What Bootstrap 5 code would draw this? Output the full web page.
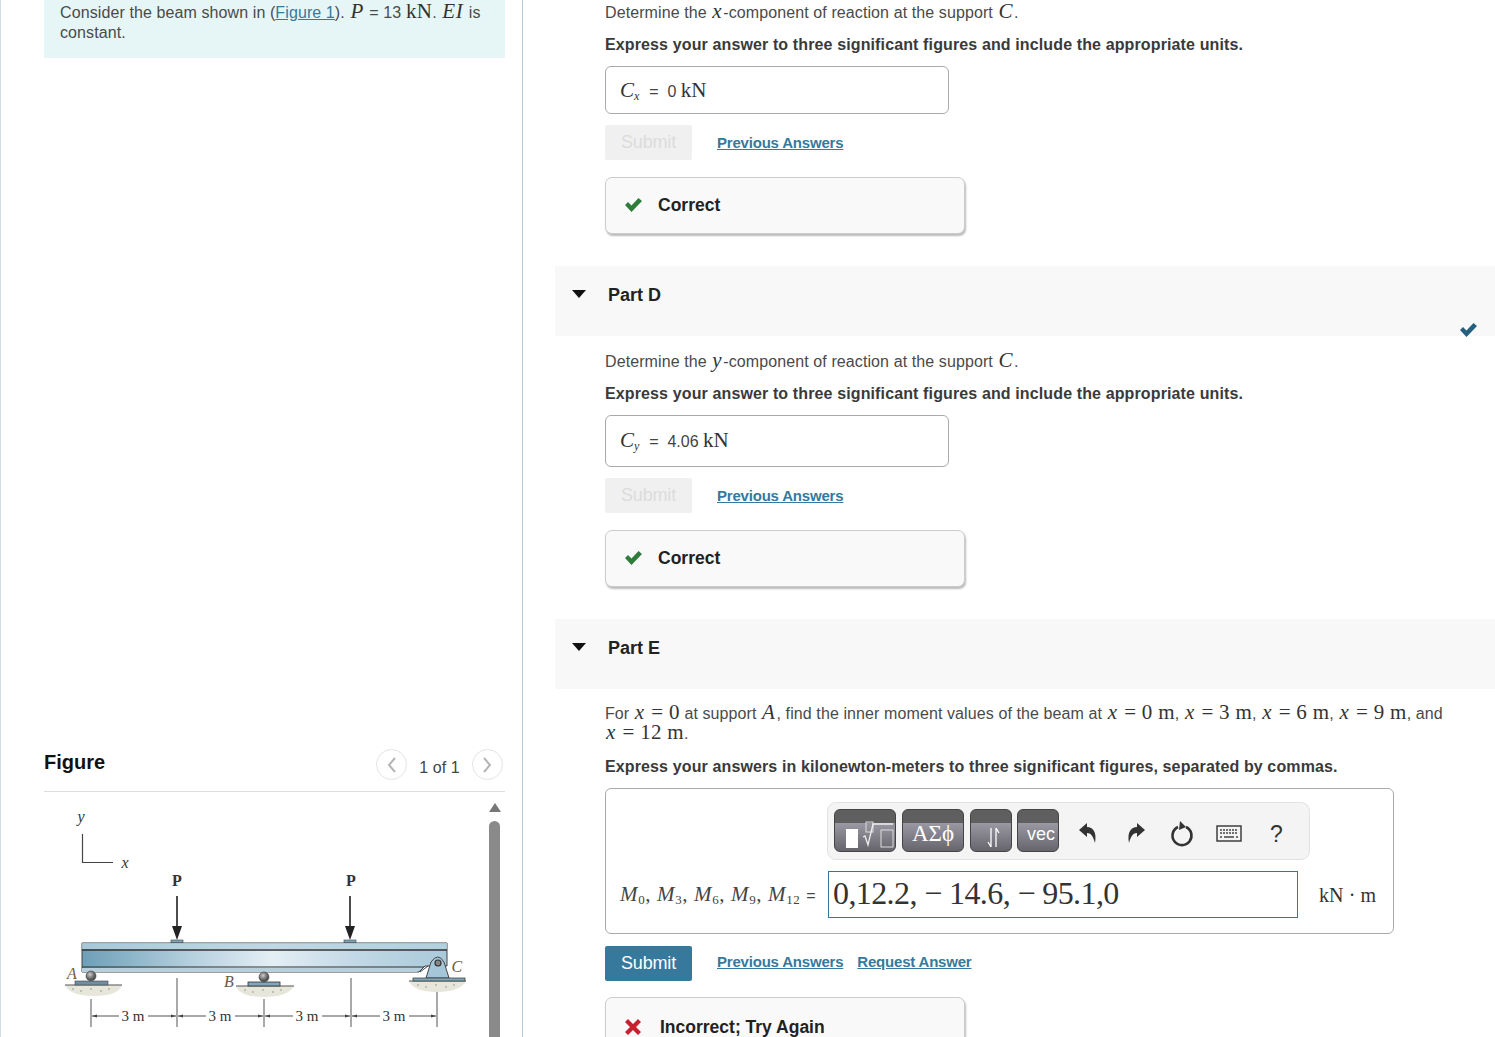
<!DOCTYPE html>
<html lang="en">
<head>
<meta charset="utf-8">
<title>Beam problem</title>
<link href="https://cdn.jsdelivr.net/npm/bootstrap@5.3.0/dist/css/bootstrap.min.css" rel="stylesheet">
<script src="https://cdn.jsdelivr.net/npm/bootstrap@5.3.0/dist/js/bootstrap.bundle.min.js"></script>
<style>
html,body{height:1037px;overflow:hidden;margin:0;background:#fff}
body{font-family:"Liberation Sans",Arial,sans-serif;font-size:16px;line-height:22px;color:#4a4a4a;letter-spacing:.1px}
.shell{height:1037px;overflow:hidden}
.leftpane{width:523px;flex:none;height:1037px;border-left:1px solid #d2dbe3;border-right:1px solid #b9c9dc;padding-left:43px;padding-right:17px;overflow:hidden}
.rightpane{flex:1 1 auto;padding-left:32px;min-width:0;height:1037px;overflow:hidden}
.infobox{background:#e6f6f6;height:58px;padding:3px 16px 0;line-height:20px;color:#4a4a4a}
.mi{font-family:"Liberation Serif",serif;font-style:italic;font-size:21px;line-height:0;color:#333;letter-spacing:.6px;padding:0 1px}
.mr{font-family:"Liberation Serif",serif;font-size:21px;line-height:0;color:#333;letter-spacing:.3px}
.eqs{padding:0 1px}
.sb{font-size:12px;line-height:0;vertical-align:-3px}
.plink{color:#36799c;text-decoration:underline}
.fighead{margin-top:692px;height:42px;border-bottom:1px solid #ddd}
.figtitle{font-size:20px;font-weight:700;color:#111;line-height:24px;letter-spacing:0}
.pager{color:#444;width:127px;margin-top:-1px;margin-right:2px}
.pagertext{padding-top:7px}
.pagerdot{width:31px;height:31px;border:1px solid #e4e4e4;border-radius:50%;flex:none}
.figrow{height:246px}
.figsvg{width:445px;height:246px;flex:none;display:block}
.vscroll{width:12px;flex:none}
.vthumb{width:11px;height:300px;background:#8a8a8a;border-radius:6px 6px 0 0;margin-top:8px}
.partbody{padding-left:50px}
.prompt{height:22px;padding-top:2px}
.bold-line{font-weight:700;color:#3a3a3a;margin-top:11px;height:22px;letter-spacing:.125px;padding-top:1px}
.answerline{width:344px;border:1px solid #aaa;border-radius:6px;padding-left:13px;color:#444;margin-top:11px;letter-spacing:0}
.answerline .mi,.answerline .mr{letter-spacing:0}
.h48{height:48px;padding-top:3px}
.h52{height:52px;padding-top:2px}
.act{margin-top:11px;height:35px}
.act-last{margin-top:12px;height:34px}
.submitbtn{width:87px;height:35px;padding:0;border-radius:2px;font-size:18px;line-height:33px;border:0;background:#36799c;color:#fff;font-family:"Liberation Sans",sans-serif;font-weight:400;letter-spacing:-.15px}
.submitbtn:disabled{background:#f0f0f0;color:#dcdcdc;opacity:1}
.actlink{font-size:15px;font-weight:700;color:#36799c;text-decoration:underline;margin-left:25px;letter-spacing:-.2px;padding-top:1px}
.actlink + .actlink{margin-left:14px}
.act-last .actlink{padding-top:0;margin-top:-3px}
.feedback{width:360px;height:57px;background:#f9f9f9;border:1px solid #ccc;border-radius:7px;box-shadow:1px 2px 2px #bbb;margin-top:17px;padding-left:18px;padding-bottom:2px;font-size:17.5px;font-weight:700;color:#222;letter-spacing:0}
.feedback svg{margin-right:16px;flex:none}
.feedback .xmark{margin-right:18px}
.fb-last{padding-top:2px;padding-bottom:0}
.parthead{height:70px;background:#f8f8f8;margin-top:32px;padding-left:17px;position:relative}
.parttri{margin-bottom:14px}
.parttitle{font-size:18px;font-weight:700;color:#222;margin-left:22px;margin-top:-12px;letter-spacing:0}
.partmark{position:absolute;right:18px;bottom:-1px}
.prompt-first{margin-top:13px}
.prompt-two{margin-top:14px;padding-top:1px;line-height:20px;height:41px}
.bigbox{width:789px;height:146px;border:1px solid #aaa;border-radius:6px;margin-top:11px;padding-top:13px}
.toolbar{width:483px;height:58px;margin-left:221px;background:#f4f4f4;border:1px solid #e2e2e2;border-radius:9px;padding:6px 0 0 6px}
.tbtn{height:43px;border:1px solid #444;border-radius:6px;background:linear-gradient(#5f5f5f 0,#5f5f5f 13px,#9a99a3 13px,#66656c 100%);color:#fff;margin-right:6px;overflow:hidden;flex:none}
.w62{width:62px}.w42{width:42px}.mr5{margin-right:5px}
.glyphs{line-height:24px;padding-bottom:5px}
.glyphs .mr{font-size:23px;line-height:24px;letter-spacing:0}
.vecbtn{padding-left:9px}
.toolicons{margin-left:13px;margin-top:-1px;color:#333;font-size:23px}
.gap-redo{margin-left:28px}.gap-ref{margin-left:24px}.gap-kb{margin-left:22px}.gap-q{margin-left:28px;letter-spacing:0}
.eqrow{margin-top:11px;height:47px}
.eqlabel{width:222px;padding-left:14px;font-family:"Liberation Serif",serif;font-size:21px;letter-spacing:.62px;color:#444;white-space:nowrap}
.eqlabel .sb{font-size:13px}
.eqeq{font-family:"Liberation Sans",sans-serif;font-size:16px}
.eqinput{width:470px;height:47px;border:1px solid #35789a;font-family:"Liberation Serif",serif;font-size:32px;line-height:43px;color:#333;padding-left:4px;white-space:nowrap;letter-spacing:-.6px}
.equnit{margin-left:21px;font-family:"Liberation Serif",serif;font-size:20px;color:#333}
.fig-t{font-family:"Liberation Serif",serif;fill:#333}
</style>
</head>
<body>
<div class="shell d-flex">
  <div class="leftpane">
    <div class="infobox">Consider the beam shown in (<span class="plink">Figure 1</span>). <span class="mi">P</span> = 13 <span class="mr">kN</span>. <span class="mi">EI</span> is constant.</div>
    <div class="fighead d-flex justify-content-between align-items-start">
      <div class="figtitle">Figure</div>
      <div class="pager d-flex justify-content-between align-items-center">
        <div class="pagerdot d-flex align-items-center justify-content-center"><svg width="10" height="16" viewBox="0 0 10 16"><path d="M8 1 2 8l6 7" fill="none" stroke="#b5b5b5" stroke-width="2"/></svg></div>
        <span class="pagertext">1 of 1</span>
        <div class="pagerdot d-flex align-items-center justify-content-center"><svg width="10" height="16" viewBox="0 0 10 16"><path d="M2 1l6 7-6 7" fill="none" stroke="#b5b5b5" stroke-width="2"/></svg></div>
      </div>
    </div>
    <div class="figrow d-flex">
      <svg class="figsvg" viewBox="44 792 445 246">
        <defs>
          <linearGradient id="web" x1="0" x2="1" y1="0" y2="0"><stop offset="0" stop-color="#6d9fb8"/><stop offset=".3" stop-color="#b5d0de"/><stop offset=".52" stop-color="#e4eef5"/><stop offset=".75" stop-color="#c2d8e5"/><stop offset="1" stop-color="#a9c9da"/></linearGradient>
          <filter id="soft"><feGaussianBlur stdDeviation=".35"/></filter>
          <radialGradient id="ball" cx=".4" cy=".35"><stop offset="0" stop-color="#ccc"/><stop offset="1" stop-color="#555"/></radialGradient>
        </defs>
        <g filter="url(#soft)">
          <path d="M82.500 834V862.500H113" fill="none" stroke="#444" stroke-width="1.200"/>
          <path d="M177 896V926M350 896V926" stroke="#222" stroke-width="1.600"/>
          <path d="M172 926h10l-5 14zM345 926h10l-5 14z" fill="#222"/>
          <rect x="171" y="940" width="12" height="3" fill="#7fa6ba" stroke="#444" stroke-width=".6"/>
          <rect x="344" y="940" width="12" height="3" fill="#7fa6ba" stroke="#444" stroke-width=".6"/>
          <path d="M82 943H447V966L425 966 419 972H82Z" fill="url(#web)" stroke="#444" stroke-width="1"/>
          <path d="M82 943H447V949H82Z" fill="#b7d2e0" fill-opacity=".8"/>
          <path d="M82 968H420L417 972H82Z" fill="#b8cfdc"/>
          <path d="M82 950H447" stroke="#333" stroke-width="1.600"/>
          <path d="M82 967H424" stroke="#333" stroke-width="1.200"/>
          <path d="M65 985H122Q118 996 94 996T65 985Z" fill="#e6e6da"/>
          <path d="M236 986H294Q288 997 264 997T236 986Z" fill="#e6e6da"/>
          <path d="M409 981H466Q460 992 437 992T409 981Z" fill="#e6e6da"/>
          <path d="M72 989h2m6 2h2m8-2h2m8 2h2m6-2h2M244 990h2m6 2h2m8-2h2m8 2h2m6-2h2M417 985h2m6 2h2m8-2h2m8 2h2m6-2h2" stroke="#999" stroke-width="1"/>
          <path d="M65 985H122M236 986H294M409 981H466" stroke="#555"/>
          <rect x="75" y="981" width="33" height="4" fill="#6d8fa3" stroke="#444" stroke-width=".6"/>
          <rect x="248" y="982" width="32" height="4" fill="#7fa6ba" stroke="#333" stroke-width=".8"/>
          <circle cx="91" cy="976" r="5" fill="url(#ball)" stroke="#444" stroke-width=".6"/>
          <circle cx="264" cy="977" r="5" fill="url(#ball)" stroke="#444" stroke-width=".6"/>
          <path d="M426 978 431 962Q438 952 444 962L449 978Z" fill="#a5c6d8" stroke="#444"/>
          <path d="M420 972 428 966" stroke="#444"/>
          <circle cx="438" cy="963" r="3" fill="#888" stroke="#333" stroke-width="1.200"/>
          <rect x="413" y="978" width="52" height="3" fill="#7fa6ba" stroke="#333" stroke-width=".7"/>
          <path d="M91 999V1027M177 978V1027M264 999V1027M351 978V1027M437 992V1027" stroke="#555" stroke-width="1"/>
          <path d="M92 1016H119M148 1016H176M178 1016H206M235 1016H263M265 1016H293M322 1016H350M352 1016H380M409 1016H436" stroke="#555" stroke-width="1"/>
          <path d="M92 1016l5-1.500v3zM176 1016l-5-1.500v3zM178 1016l5-1.500v3zM263 1016l-5-1.500v3zM265 1016l5-1.500v3zM350 1016l-5-1.500v3zM352 1016l5-1.500v3zM436 1016l-5-1.500v3z" fill="#444"/>
        </g>
        <text x="81" y="822" class="fig-t" font-size="16" font-style="italic" text-anchor="middle">y</text>
        <text x="125" y="868" class="fig-t" font-size="16" font-style="italic" text-anchor="middle">x</text>
        <text x="177" y="886" class="fig-t" font-size="16" font-weight="700" text-anchor="middle">P</text>
        <text x="351" y="886" class="fig-t" font-size="16" font-weight="700" text-anchor="middle">P</text>
        <text x="72" y="979" font-family="Liberation Serif" font-size="16" font-style="italic" fill="#7a5a30" text-anchor="middle">A</text>
        <text x="229" y="987" font-family="Liberation Serif" font-size="16" font-style="italic" fill="#6a5a40" text-anchor="middle">B</text>
        <text x="457" y="972" font-family="Liberation Serif" font-size="16" font-style="italic" fill="#6a5a40" text-anchor="middle">C</text>
        <text x="133" y="1021" class="fig-t" font-size="15" text-anchor="middle">3 m</text>
        <text x="220" y="1021" class="fig-t" font-size="15" text-anchor="middle">3 m</text>
        <text x="307" y="1021" class="fig-t" font-size="15" text-anchor="middle">3 m</text>
        <text x="394" y="1021" class="fig-t" font-size="15" text-anchor="middle">3 m</text>
      </svg>
      <div class="vscroll">
        <svg width="12" height="21" viewBox="0 0 12 21" class="d-block"><path d="M6 11 12 20H0Z" fill="#777"/></svg>
        <div class="vthumb"></div>
      </div>
    </div>
  </div>

  <div class="rightpane">
    <div class="partbody">
      <div class="prompt">Determine the <span class="mi">x</span>-component of reaction at the support <span class="mi">C</span>.</div>
      <div class="bold-line">Express your answer to three significant figures and include the appropriate units.</div>
      <div class="answerline h48 d-flex align-items-center gap-1"><span><span class="mi">C<span class="sb">x</span></span> &nbsp;=&nbsp; 0 <span class="mr">kN</span></span></div>
      <div class="act d-flex align-items-center"><button class="btn submitbtn" disabled>Submit</button><span class="actlink">Previous Answers</span></div>
      <div class="feedback d-flex align-items-center"><svg width="18" height="14" viewBox="0 0 18 14"><path d="M1 7l3-3 3.500 3.500L14.500 0 18 3 7.500 14Z" fill="#2e7d3a"/></svg>Correct</div>
    </div>

    <div class="parthead d-flex align-items-center">
      <svg class="parttri" width="14" height="8" viewBox="0 0 14 8"><path d="M0 0H14L7 8Z" fill="#111"/></svg>
      <div class="parttitle">Part D</div>
      <svg class="partmark" width="18" height="14" viewBox="0 0 18 14"><path d="M1 7l3-3 3.500 3.500L14.500 0 18 3 7.500 14Z" fill="#245f80"/></svg>
    </div>
    <div class="partbody">
      <div class="prompt prompt-first">Determine the <span class="mi">y</span>-component of reaction at the support <span class="mi">C</span>.</div>
      <div class="bold-line">Express your answer to three significant figures and include the appropriate units.</div>
      <div class="answerline h52 d-flex align-items-center gap-1"><span><span class="mi">C<span class="sb">y</span></span> &nbsp;=&nbsp; 4.06 <span class="mr">kN</span></span></div>
      <div class="act d-flex align-items-center"><button class="btn submitbtn" disabled>Submit</button><span class="actlink">Previous Answers</span></div>
      <div class="feedback d-flex align-items-center"><svg width="18" height="14" viewBox="0 0 18 14"><path d="M1 7l3-3 3.500 3.500L14.500 0 18 3 7.500 14Z" fill="#2e7d3a"/></svg>Correct</div>
    </div>

    <div class="parthead d-flex align-items-center">
      <svg class="parttri" width="14" height="8" viewBox="0 0 14 8"><path d="M0 0H14L7 8Z" fill="#111"/></svg>
      <div class="parttitle">Part E</div>
    </div>
    <div class="partbody">
      <div class="prompt-two">For <span class="mi">x</span> <span class="mr eqs">=</span> <span class="mr">0</span> at support <span class="mi">A</span>, find the inner moment values of the beam at <span class="mi">x</span> <span class="mr eqs">=</span> <span class="mr">0 m</span>, <span class="mi">x</span> <span class="mr eqs">=</span> <span class="mr">3 m</span>, <span class="mi">x</span> <span class="mr eqs">=</span> <span class="mr">6 m</span>, <span class="mi">x</span> <span class="mr eqs">=</span> <span class="mr">9 m</span>, and<br><span class="mi">x</span> <span class="mr eqs">=</span> <span class="mr">12 m</span>.</div>
      <div class="bold-line">Express your answers in kilonewton-meters to three significant figures, separated by commas.</div>
      <div class="bigbox">
        <div class="toolbar d-flex">
          <div class="tbtn w62"><svg width="60" height="41" viewBox="0 0 60 41" class="d-block"><rect x="11" y="19" width="12" height="19" fill="#fff"/><rect x="31" y="12" width="7" height="10" fill="none" stroke="#ddd"/><path d="M28 27l2-1 3 9 5-21h20" fill="none" stroke="#eee" stroke-width="1.300"/><rect x="46" y="20" width="12" height="17" fill="none" stroke="#ddd"/></svg></div>
          <div class="tbtn w62 d-flex align-items-end justify-content-center glyphs"><span class="mr text-white">ΑΣϕ</span></div>
          <div class="tbtn w42 mr5"><svg width="40" height="41" viewBox="0 0 40 41" class="d-block"><path d="M20 18V37M20 37l-3-5M25 37V18M25 18l3 5" fill="none" stroke="#fff" stroke-width="1.300"/></svg></div>
          <div class="tbtn w42 vecbtn d-flex align-items-end pb-1"><span class="text-white" style="font-size:18px;line-height:26px;letter-spacing:0">vec</span></div>
          <div class="toolicons d-flex align-items-center">
            <svg width="20" height="21" viewBox="0 0 20 21"><path d="M1 7 9 0V4C15 4 19 9 17 20 15 13 13 10 9 10V14Z" fill="#333"/></svg>
            <svg class="gap-redo" width="20" height="21" viewBox="0 0 20 21"><path d="M19 7 11 0V4C5 4 1 9 3 20 5 13 7 10 11 10V14Z" fill="#333"/></svg>
            <svg class="gap-ref" width="24" height="26" viewBox="0 0 24 26"><path d="M8 6A9.500 9.500 0 1 0 16 6" fill="none" stroke="#333" stroke-width="2.600"/><path d="M10 0 16 6 9 9Z" fill="#333"/></svg>
            <svg class="gap-kb" width="26" height="17" viewBox="0 0 26 17"><rect x="1" y="1" width="24" height="15" fill="#f4f4f4" stroke="#333" stroke-width="1.400"/><path d="M4 5h18M4 8h18" stroke="#444" stroke-width="1.600" stroke-dasharray="2 1"/><path d="M4 12h2M8 12h10M20 12h2" stroke="#444" stroke-width="1.600"/></svg>
            <span class="gap-q">?</span>
          </div>
        </div>
        <div class="eqrow d-flex align-items-center">
          <div class="eqlabel"><i>M</i><span class="sb">0</span>, <i>M</i><span class="sb">3</span>, <i>M</i><span class="sb">6</span>, <i>M</i><span class="sb">9</span>, <i>M</i><span class="sb">12</span> <span class="eqeq">=</span></div>
          <div class="eqinput">0,12.2, − 14.6, − 95.1,0</div>
          <div class="equnit">kN · m</div>
        </div>
      </div>
      <div class="act-last d-flex align-items-center"><button class="btn submitbtn">Submit</button><span class="actlink">Previous Answers</span><span class="actlink">Request Answer</span></div>
      <div class="feedback fb-last d-flex align-items-center"><svg class="xmark" width="18" height="16" viewBox="0 0 18 16"><path d="M1 3 4 0 9 5 14 0 17 3 12 8 17 13 14 16 9 11 4 16 1 13 6 8Z" fill="#c8202f"/></svg>Incorrect; Try Again</div>
    </div>
  </div>
</div>
</body>
</html>
